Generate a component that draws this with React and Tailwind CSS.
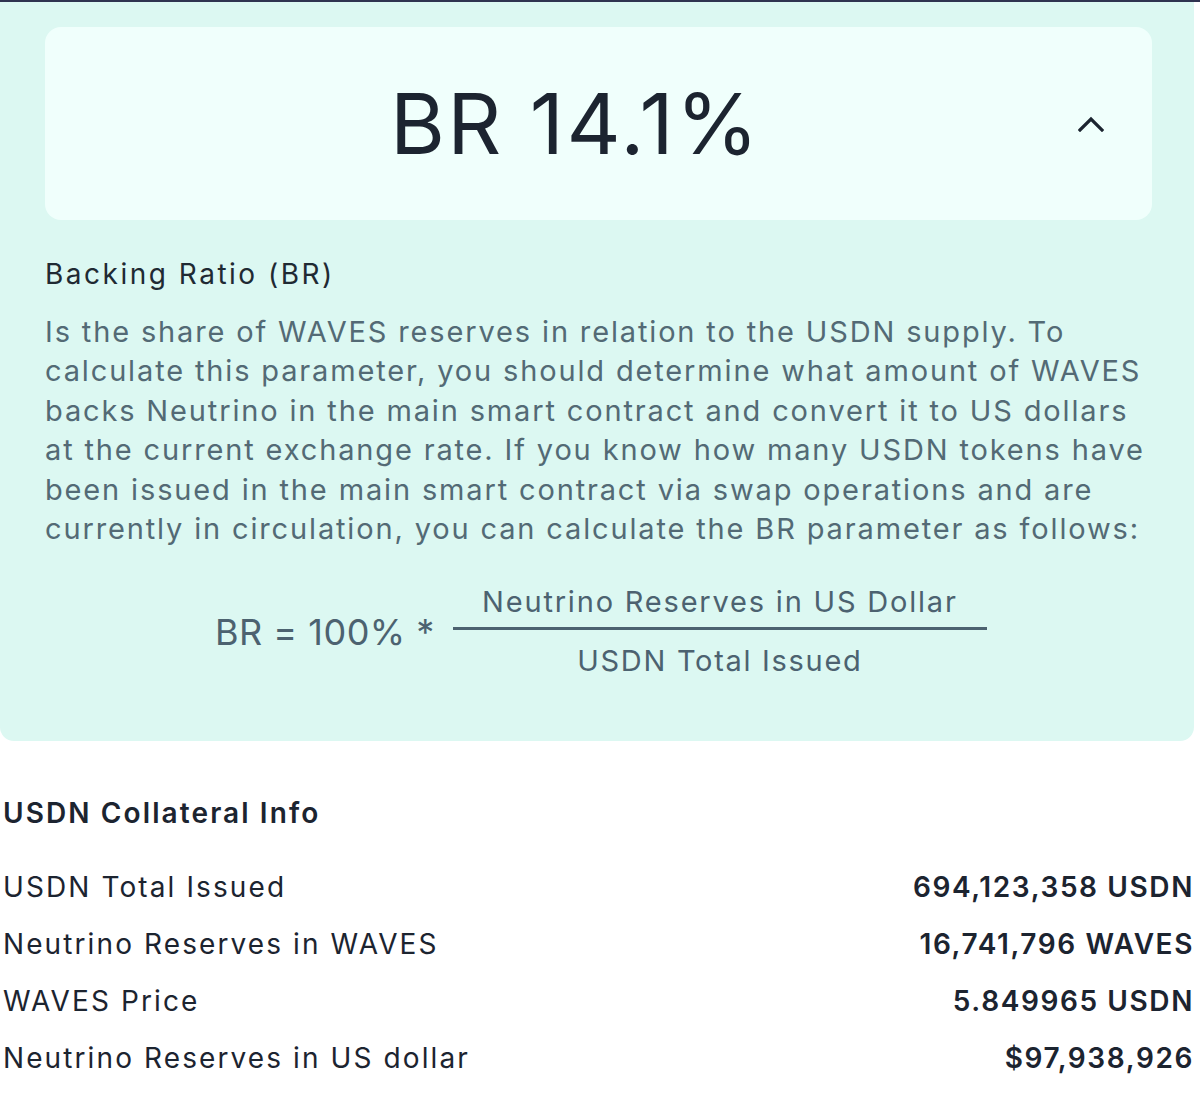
import React from "react";

const font = { fontFamily: "Inter, 'Open Sans', sans-serif" };

function Chevron() {
  return (
    <svg width="26" height="16" viewBox="0 0 26 16" fill="none">
      <path d="M2 14 L13 3 L24 14" stroke="#1c2430" strokeWidth="3.2" strokeLinecap="square" />
    </svg>
  );
}

const rows = [
  ["USDN Total Issued", "694,123,358 USDN"],
  ["Neutrino Reserves in WAVES", "16,741,796 WAVES"],
  ["WAVES Price", "5.849965 USDN"],
  ["Neutrino Reserves in US dollar", "$97,938,926"],
];

export default function App() {
  return (
    <div className="w-[1200px] h-[1107px] bg-white overflow-hidden" style={font}>
      <div className="h-[2px] bg-[#2f3350]" />
      <div className="w-[1194px] bg-[#dcf8f2] rounded-b-[14px] pt-[25px] pl-[45px] pr-[42px] pb-[62px]">
        <div className="h-[193px] bg-[#f0fffc] rounded-[16px] flex items-center pl-[48px] pr-[48px]">
          <div className="flex-1 text-center pr-[20px] text-[84px] leading-none text-[#1c2430] tracking-[2.4px]">
            BR 14.1%
          </div>
          <Chevron />
        </div>
        <div className="mt-[37px] text-[28px] leading-[34px] text-[#1f2a33] tracking-[2.5px]">
          Backing Ratio (BR)
        </div>
        <div className="mt-[21px] text-[29px] leading-[39.4px] text-[#536a75] whitespace-nowrap tracking-[1.85px]">
          Is the share of WAVES reserves in relation to the USDN supply. To<br />
          calculate this parameter, you should determine what amount of WAVES<br />
          backs Neutrino in the main smart contract and convert it to US dollars<br />
          at the current exchange rate. If you know how many USDN tokens have<br />
          been issued in the main smart contract via swap operations and are<br />
          currently in circulation, you can calculate the BR parameter as follows:
        </div>
        <div className="mt-[36px] flex items-center pl-[170px] text-[#4c6270]">
          <div className="text-[36px] leading-none tracking-[0.5px]">BR = 100% *</div>
          <div className="ml-[18px] flex flex-col items-stretch w-[534px]">
            <div className="text-center text-[29px] leading-[36px] tracking-[1.8px]">Neutrino Reserves in US Dollar</div>
            <div className="h-[3px] bg-[#4c6270] mt-[7px] mb-[13px]" />
            <div className="text-center text-[29px] leading-[36px] tracking-[1.7px]">USDN Total Issued</div>
          </div>
        </div>
      </div>
      <div className="pl-[3px] pr-[6px]">
        <div className="mt-[55px] text-[28px] leading-[34px] font-semibold text-[#1c2430] tracking-[2.1px]">
          USDN Collateral Info
        </div>
        <div className="mt-[40px] flex flex-col gap-[22px]">
          {rows.map(([k, v]) => (
            <div key={k} className="flex justify-between items-center text-[28px] leading-[35px] text-[#1c2430]">
              <span className="tracking-[2.1px]">{k}</span>
              <span className="font-semibold tracking-[1.6px]">{v}</span>
            </div>
          ))}
        </div>
      </div>
    </div>
  );
}
